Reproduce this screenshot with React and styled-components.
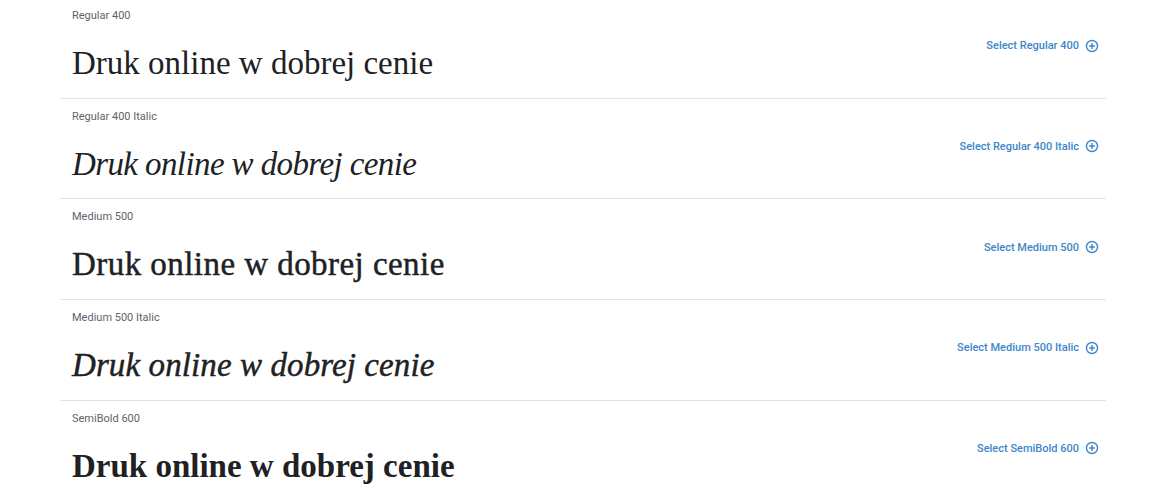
import React from "react";
import styled, { createGlobalStyle } from "styled-components";

const GlobalStyle = createGlobalStyle`
  body {
    margin: 0;
    background: #ffffff;
    font-family: "Roboto", "Liberation Sans", sans-serif;
  }
`;

const blue = "#3d86c9";

const List = styled.div`
  margin-top: -2px;
  padding: 0 64px 0 60px;
`;

const Row = styled.div`
  display: flex;
  align-items: center;
  justify-content: space-between;
  height: 99.67px;
  padding: 0 7px 0 12px;
  border-bottom: ${props => (props.last ? "none" : "1px solid #e3e3e3")};
`;

const Info = styled.div`
  display: flex;
  flex-direction: column;
  align-self: stretch;
`;

const Label = styled.div`
  margin-top: 11px;
  font-size: 11px;
  line-height: 14px;
  color: #5f6368;
`;

/* no medium weight in Liberation Serif, so a thin stroke stands in for 500 */
const Sample = styled.div`
  margin-top: 20px;
  font-family: "Liberation Serif", "DejaVu Serif", serif;
  font-size: 33px;
  line-height: 40px;
  color: #202124;
  white-space: nowrap;
  font-weight: ${props => (props.weight >= 600 ? 700 : 400)};
  font-style: ${props => (props.italic ? "italic" : "normal")};
  letter-spacing: ${props => props.spacing}px;
  -webkit-text-stroke: ${props => (props.weight === 500 ? "0.45px #202124" : "0")};
`;

const SelectButton = styled.button`
  display: flex;
  align-items: center;
  gap: 6px;
  margin-top: -4px;
  padding: 0;
  border: 0;
  background: none;
  font-family: "Roboto", "Liberation Sans", sans-serif;
  font-size: 11px;
  font-weight: 500;
  color: ${blue};
  cursor: pointer;

  svg {
    width: 14px;
    height: 14px;
  }
`;

const styles = [
  { name: "Regular 400", weight: 400, italic: false, spacing: 0 },
  { name: "Regular 400 Italic", weight: 400, italic: true, spacing: -0.6 },
  { name: "Medium 500", weight: 500, italic: false, spacing: 0.45 },
  { name: "Medium 500 Italic", weight: 500, italic: true, spacing: 0.1 },
  { name: "SemiBold 600", weight: 600, italic: false, spacing: 0 }
];

const AddIcon = () => (
  <svg viewBox="0 0 24 24" fill="none" stroke={blue} strokeWidth="2.4">
    <circle cx="12" cy="12" r="9.5" />
    <path d="M12 7v10M7 12h10" />
  </svg>
);

export default function App() {
  return (
    <>
      <GlobalStyle />
      <List>
        {styles.map((s, i) => (
          <Row key={s.name} last={i === styles.length - 1}>
            <Info>
              <Label>{s.name}</Label>
              <Sample weight={s.weight} italic={s.italic} spacing={s.spacing}>
                Druk online w dobrej cenie
              </Sample>
            </Info>
            <SelectButton>
              Select {s.name}
              <AddIcon />
            </SelectButton>
          </Row>
        ))}
      </List>
    </>
  );
}
